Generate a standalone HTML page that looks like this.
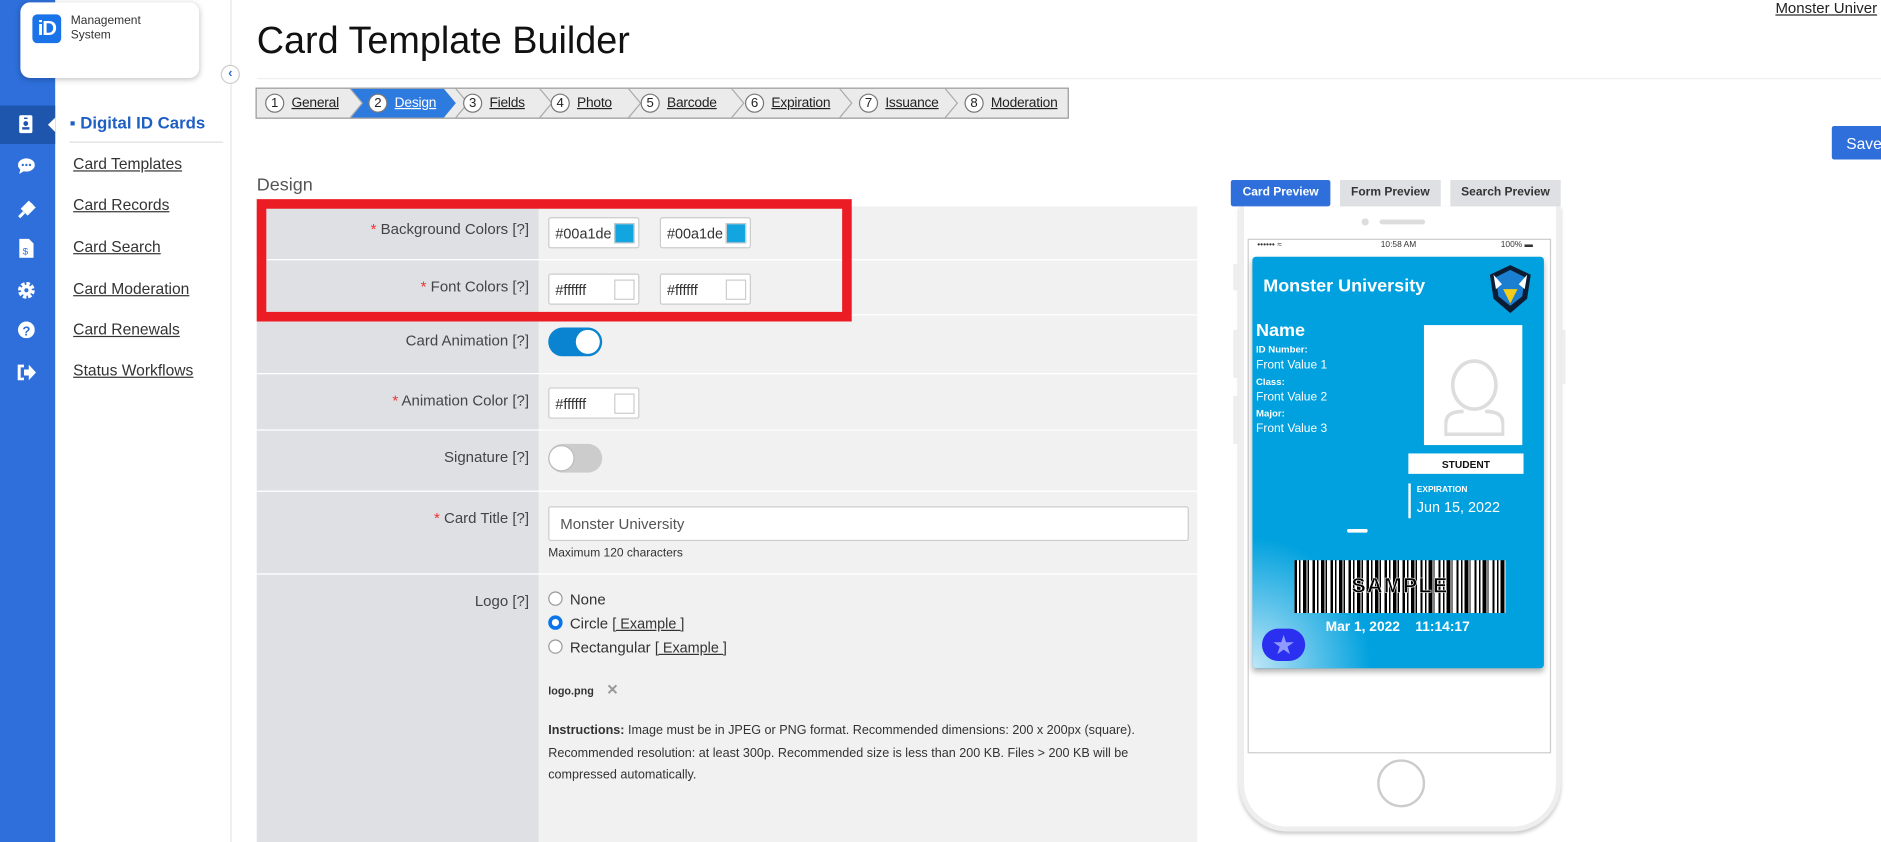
<!DOCTYPE html>
<html><head><meta charset="utf-8"><style>
*{box-sizing:border-box;margin:0;padding:0}
html,body{width:1881px;height:842px;overflow:hidden;background:#fff;font-family:"Liberation Sans",sans-serif;color:#333}
#w{position:absolute;left:0;top:0;width:1568px;height:702px;transform:scale(1.19962);transform-origin:0 0}
.a{position:absolute}
.sb{left:0;top:0;width:46px;height:702px;background:#2e6fdb}
.lnk{left:61px;font-size:13px;color:#333;text-decoration:underline}
.step{top:73px;height:26px;font-size:11.5px;letter-spacing:-0.2px;color:#222;display:flex;align-items:center}
.step span.n{display:inline-block;width:16px;height:16px;border:1px solid #777;border-radius:50%;background:#fff;text-align:center;line-height:14px;font-size:11px;margin-right:6px;letter-spacing:0}
.step u{text-decoration:underline}
.row{left:214px;width:784px;border-top:1px solid #fff}
.lab{position:absolute;left:0;top:0;width:235px;height:100%;background:#dfe0e4;text-align:right;padding-right:8px;font-size:12.5px;color:#444}
.val{position:absolute;left:235px;top:0;width:549px;height:100%;background:#f1f1f1}
.st{color:#e33}
.ci{position:absolute;width:76px;height:26px;border:1px solid #ccc;background:#fff;border-radius:2px;font-size:12px;color:#333;padding:6px 0 0 5px}
.ci i{position:absolute;right:3px;top:4px;width:17px;height:17px;border:1px solid #ccc}
.tg{position:absolute;width:45px;height:24px;border-radius:12px}
.tg i{position:absolute;top:2px;width:20px;height:20px;border-radius:50%;background:#fff}
.rad{display:inline-block;width:12px;height:12px;border:1px solid #999;border-radius:50%;background:#fff;vertical-align:-1px;margin-right:6px}
.card{color:#fff;font-family:"Liberation Sans",sans-serif}
</style></head><body><div id="w">
<div class="a sb"></div>
<div class="a" style="left:0;top:88px;width:46px;height:32px;background:#1f56ad"></div>
<div class="a" style="left:40px;top:98px;width:0;height:0;border-top:6px solid transparent;border-bottom:6px solid transparent;border-right:6px solid #fff"></div>
<svg class="a" style="left:15px;top:96px" width="14" height="16"><rect x="1" y="0" width="11" height="15" rx="1.5" fill="#fff"/><circle cx="6.5" cy="7" r="2" fill="#1f56ad"/><rect x="3.5" y="10" width="6" height="2" fill="#1f56ad"/><rect x="5" y="2" width="3" height="1.2" fill="#1f56ad"/></svg>
<svg class="a" style="left:14px;top:131px" width="16" height="14"><ellipse cx="8" cy="6.5" rx="7" ry="5.5" fill="#fff"/><path d="M3 10 L2 14 L7 11z" fill="#fff"/><circle cx="5" cy="6.5" r="1" fill="#2e6fdb"/><circle cx="8" cy="6.5" r="1" fill="#2e6fdb"/><circle cx="11" cy="6.5" r="1" fill="#2e6fdb"/></svg>
<svg class="a" style="left:14px;top:167px" width="16" height="16"><path d="M2 14 L6 10 M10 2 L14 6 L9 11 L5 7z M10 6l3-3" stroke="#fff" stroke-width="2.5" fill="#fff"/></svg>
<svg class="a" style="left:16px;top:199px" width="12" height="16"><path d="M0 0h8l4 4v12H0z" fill="#fff"/><text x="3" y="13" font-size="8" fill="#2e6fdb" font-family="Liberation Sans">$</text></svg>
<svg class="a" style="left:15px;top:235px" width="14" height="14"><circle cx="7" cy="7" r="5" fill="none" stroke="#fff" stroke-width="4" stroke-dasharray="2.6 1.3"/><circle cx="7" cy="7" r="4.5" fill="#fff"/><circle cx="7" cy="7" r="1.7" fill="#2e6fdb"/></svg>
<svg class="a" style="left:15px;top:268px" width="14" height="14"><circle cx="7" cy="7" r="7" fill="#fff"/><text x="3.7" y="11.5" font-size="11" font-weight="bold" fill="#2e6fdb" font-family="Liberation Sans">?</text></svg>
<svg class="a" style="left:14px;top:304px" width="16" height="13"><path d="M6 1H2v11h4" stroke="#fff" stroke-width="2.5" fill="none"/><path d="M6 4h4V0l6 6.5-6 6.5V9H6z" fill="#fff"/></svg>
<div class="a" style="left:17px;top:2px;width:149px;height:63px;background:#fff;border-radius:8px;box-shadow:0 1px 5px rgba(0,0,0,.25)"></div>
<div class="a" style="left:27px;top:12px;width:24px;height:24px;background:#1a73e8;border-radius:4px;color:#fff;font-weight:bold;font-size:17px;line-height:24px;text-align:center;letter-spacing:-1px">iD</div>
<div class="a" style="left:59px;top:12px;font-size:10px;line-height:12px;color:#333">Management<br>System</div>
<div class="a" style="left:192px;top:0;width:1px;height:702px;background:#e5e5e5"></div>
<div class="a" style="left:184px;top:54px;width:16px;height:16px;border-radius:50%;background:#fff;border:1px solid #ccc;color:#2e6fdb;font-size:11px;line-height:13px;text-align:center;font-weight:bold">‹</div>
<div class="a" style="left:58px;top:94px;font-size:14px;font-weight:bold;color:#1f5fc4">▪ Digital ID Cards</div>
<div class="a" style="left:58px;top:118px;width:128px;height:1px;background:#ddd"></div>
<div class="a lnk" style="top:129px">Card Templates</div>
<div class="a lnk" style="top:163px">Card Records</div>
<div class="a lnk" style="top:198px">Card Search</div>
<div class="a lnk" style="top:233px">Card Moderation</div>
<div class="a lnk" style="top:267px">Card Renewals</div>
<div class="a lnk" style="top:301px">Status Workflows</div>
<div class="a" style="left:214px;top:15px;font-size:31.5px;color:#111">Card Template Builder</div>
<div class="a" style="left:214px;top:65px;width:1354px;height:1px;background:#eee"></div>
<div class="a" style="left:1480px;top:0;font-size:12.5px;text-decoration:underline;color:#222;white-space:nowrap">Monster Univer</div>
<div class="a" style="left:213px;top:73px;width:678px;height:26px;background:#ebebeb;border:1px solid #999"></div>
<svg class="a" style="left:214px;top:74px" width="676" height="24">
<path d="M78 0 H156 L166 12 L156 24 H78 L88 12z" fill="#2e7be0"/>
<g stroke="#aaa" fill="none"><path d="M78 0 L88 12 L78 24"/><path d="M166 0 L176 12 L166 24"/><path d="M236 0 L246 12 L236 24"/><path d="M310 0 L320 12 L310 24"/><path d="M396 0 L406 12 L396 24"/><path d="M486 0 L496 12 L486 24"/><path d="M574 0 L584 12 L574 24"/></g></svg>
<div class="a step" style="left:221px"><span class="n">1</span><u>General</u></div>
<div class="a step" style="left:307px;color:#fff"><span class="n" style="color:#222">2</span><u>Design</u></div>
<div class="a step" style="left:386px"><span class="n">3</span><u>Fields</u></div>
<div class="a step" style="left:459px"><span class="n">4</span><u>Photo</u></div>
<div class="a step" style="left:534px"><span class="n">5</span><u>Barcode</u></div>
<div class="a step" style="left:621px"><span class="n">6</span><u>Expiration</u></div>
<div class="a step" style="left:716px"><span class="n">7</span><u>Issuance</u></div>
<div class="a step" style="left:804px"><span class="n">8</span><u>Moderation</u></div>
<div class="a" style="left:1527px;top:105px;width:45px;height:28px;background:#2e6fdb;color:#fff;font-size:13px;padding:7px 0 0 12px;border-radius:2px">Save</div>
<div class="a" style="left:214px;top:146px;font-size:15px;color:#555">Design</div>
<div class="a row" style="top:171px;height:45px"><div class="lab" style="padding-top:12px"><span class="st">*</span> Background Colors [?]</div><div class="val"><div class="ci" style="left:8px;top:9px">#00a1de<i style="background:#12a5e0"></i></div><div class="ci" style="left:101px;top:9px">#00a1de<i style="background:#12a5e0"></i></div></div></div>
<div class="a row" style="top:216px;height:46px"><div class="lab" style="padding-top:15px"><span class="st">*</span> Font Colors [?]</div><div class="val"><div class="ci" style="left:8px;top:11px">#ffffff<i></i></div><div class="ci" style="left:101px;top:11px">#ffffff<i></i></div></div></div>
<div class="a row" style="top:262px;height:49px"><div class="lab" style="padding-top:14px">Card Animation [?]</div><div class="val"><div class="tg" style="left:8px;top:10px;background:#0a84d0"><i style="left:23px"></i></div></div></div>
<div class="a row" style="top:311px;height:47px"><div class="lab" style="padding-top:15px"><span class="st">*</span> Animation Color [?]</div><div class="val"><div class="ci" style="left:8px;top:11px">#ffffff<i></i></div></div></div>
<div class="a row" style="top:358px;height:51px"><div class="lab" style="padding-top:15px">Signature [?]</div><div class="val"><div class="tg" style="left:8px;top:11px;background:#ccc"><i style="left:1px;box-shadow:0 0 0 1px #bbb"></i></div></div></div>
<div class="a row" style="top:409px;height:69px"><div class="lab" style="padding-top:15px"><span class="st">*</span> Card Title [?]</div><div class="val"><div style="position:absolute;left:8px;top:12px;width:534px;height:29px;background:#fff;border:1px solid #ccc;border-radius:2px;font-size:12.5px;color:#555;padding:7px 0 0 9px">Monster University</div><div style="position:absolute;left:8px;top:46px;font-size:10px;color:#333">Maximum 120 characters</div></div></div>
<div class="a row" style="top:478px;height:224px"><div class="lab" style="padding-top:15px">Logo [?]</div><div class="val" style="font-size:12.5px;color:#333">
<div style="position:absolute;left:8px;top:14px"><span class="rad"></span>None</div>
<div style="position:absolute;left:8px;top:34px"><span class="rad" style="border:3.5px solid #0a74e8"></span>Circle <u style="font-size:12px">[ Example ]</u></div>
<div style="position:absolute;left:8px;top:54px"><span class="rad"></span>Rectangular <u style="font-size:12px">[ Example ]</u></div>
<div style="position:absolute;left:8px;top:89px;font-size:9px;font-weight:bold">logo.png <span style="color:#999;font-size:12px;margin-left:8px">✕</span></div>
<div style="position:absolute;left:8px;top:121px;width:530px;font-size:10.5px;line-height:18.5px">
<b>Instructions:</b> Image must be in JPEG or PNG format. Recommended dimensions: 200 x 200px (square). Recommended resolution: at least 300p. Recommended size is less than 200 KB. Files &gt; 200 KB will be compressed automatically.</div></div></div>
<div class="a" style="left:214px;top:166px;width:496px;height:102px;border:8px solid #ec1c24"></div>
<div class="a" style="left:1026px;top:150px;width:83px;height:22px;background:#2e6fdb;color:#fff;font-size:10px;font-weight:bold;text-align:center;line-height:22px;border-radius:2px">Card Preview</div>
<div class="a" style="left:1117px;top:150px;width:84px;height:22px;background:#dfe0e4;color:#333;font-size:10px;font-weight:bold;text-align:center;line-height:22px">Form Preview</div>
<div class="a" style="left:1209px;top:150px;width:92px;height:22px;background:#dfe0e4;color:#333;font-size:10px;font-weight:bold;text-align:center;line-height:22px">Search Preview</div>
<div class="a" style="left:1033px;top:172px;width:268px;height:521px;border:4px solid #eee;border-top:none;border-radius:0 0 40px 40px;box-shadow:0 2px 3px #ccc"></div>
<div class="a" style="left:1135px;top:182px;width:6px;height:6px;border-radius:50%;background:#ddd"></div>
<div class="a" style="left:1150px;top:183px;width:38px;height:4px;border-radius:2px;background:#ddd"></div>
<div class="a" style="left:1028px;top:220px;width:4px;height:22px;background:#eee"></div>
<div class="a" style="left:1028px;top:275px;width:4px;height:40px;background:#eee"></div>
<div class="a" style="left:1028px;top:330px;width:4px;height:40px;background:#eee"></div>
<div class="a" style="left:1302px;top:275px;width:3px;height:45px;background:#eee"></div>
<div class="a" style="left:1040px;top:199px;width:253px;height:429px;border:1px solid #ccc"></div>
<div class="a" style="left:1048px;top:201px;font-size:7px;color:#333">•••••• ≈</div>
<div class="a" style="left:1151px;top:201px;font-size:7px;color:#333">10:58 AM</div>
<div class="a" style="left:1251px;top:201px;font-size:7px;color:#333">100% ▬</div>
<div class="a" style="left:1148px;top:633px;width:40px;height:40px;border-radius:50%;border:2px solid #ccc"></div>
<div class="a card" style="left:1044px;top:214px;width:243px;height:343px;background:#00a1de;border-radius:3px;box-shadow:0 3px 5px rgba(0,0,0,.3);overflow:hidden">
<div style="position:absolute;left:0;bottom:0;width:100px;height:110px;background:radial-gradient(ellipse at 0% 100%,#bfe6f7 0%,rgba(0,161,222,0) 70%)"></div>
<div style="position:absolute;left:9px;top:16px;font-size:15px;font-weight:bold">Monster University</div>
<svg style="position:absolute;left:196px;top:5px" width="38" height="44"><path d="M19 2 L36 10 L33 30 L19 42 L5 30 L2 10z" fill="#0c1d33"/><path d="M19 6 L31 12 L29 28 L19 36 L9 28 L7 12z" fill="#1a7fd0"/><path d="M13 22 L25 22 L19 34z" fill="#f3cc1a"/><path d="M5 10 L12 18 L7 22z M33 10 L26 18 L31 22z" fill="#fff"/></svg>
<div style="position:absolute;left:3px;top:53px;font-size:15px;font-weight:bold">Name</div>
<div style="position:absolute;left:3px;top:71px;font-size:8px;line-height:13.3px"><b>ID Number:</b><br><span style="font-size:10px">Front Value 1</span><br><b>Class:</b><br><span style="font-size:10px">Front Value 2</span><br><b>Major:</b><br><span style="font-size:10px">Front Value 3</span></div>
<div style="position:absolute;left:143px;top:57px;width:82px;height:100px;background:#fff"></div>
<svg style="position:absolute;left:160px;top:85px" width="50" height="70"><ellipse cx="25" cy="22" rx="18" ry="20" fill="none" stroke="#ddd" stroke-width="3"/><path d="M16 44 C4 44 1 48 1 56 V63 H49 V56 C49 48 46 44 34 44" fill="none" stroke="#ddd" stroke-width="3"/></svg>
<div style="position:absolute;left:130px;top:164px;width:96px;height:17px;background:#fff;color:#111;font-size:8.5px;font-weight:bold;text-align:center;line-height:18px">STUDENT</div>
<div style="position:absolute;left:130px;top:189px;width:2px;height:29px;background:#fff"></div>
<div style="position:absolute;left:137px;top:191px;font-size:7px;font-weight:bold">EXPIRATION</div>
<div style="position:absolute;left:137px;top:202px;font-size:12px">Jun 15, 2022</div>
<div style="position:absolute;left:79px;top:227px;width:17px;height:3px;background:#fff;border-radius:1px"></div>
<div style="position:absolute;left:35px;top:253px;width:176px;height:44px;background:repeating-linear-gradient(90deg,#000 0 2px,#fff 2px 4px,#000 4px 5px,#fff 5px 7px,#000 7px 10px,#fff 10px 11px,#000 11px 12px,#fff 12px 15px);text-align:center;font-size:18px;font-weight:bold;color:#000;line-height:43px;-webkit-text-stroke:0.5px #fff;letter-spacing:1px">SAMPLE</div>
<div style="position:absolute;left:61px;top:303px;font-size:11.5px;font-weight:bold">Mar 1, 2022 &nbsp;&nbsp; 11:14:17</div>
<div style="position:absolute;left:8px;top:310px;width:36px;height:27px;border-radius:14px;background:#2b2ff0;color:#8f9bff;font-size:22px;text-align:center;line-height:27px">★</div>
</div>
</div></body></html>
